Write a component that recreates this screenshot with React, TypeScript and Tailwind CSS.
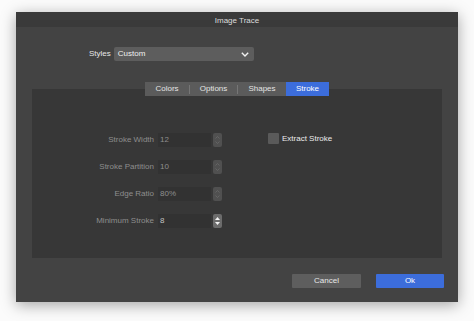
const Stepper = ({ enabled }: { enabled: boolean }) => (
  <div
    className={`w-[9px] h-[14px] rounded-[2px] flex flex-col items-center justify-center gap-[2px] ${
      enabled ? "bg-[#6c6c6c]" : "bg-[#505050]"
    }`}
  >
    {enabled ? (
      <>
        <svg width="5" height="3" viewBox="0 0 5 3">
          <path d="M0 3 L2.5 0 L5 3 Z" fill="#f2f2f2" />
        </svg>
        <svg width="5" height="3" viewBox="0 0 5 3">
          <path d="M0 0 L2.5 3 L5 0 Z" fill="#f2f2f2" />
        </svg>
      </>
    ) : (
      <>
        <svg width="5" height="3" viewBox="0 0 5 3">
          <path d="M0.5 2.5 L2.5 0.5 L4.5 2.5" fill="none" stroke="#6a6a6a" strokeWidth="0.8" />
        </svg>
        <svg width="5" height="3" viewBox="0 0 5 3">
          <path d="M0.5 0.5 L2.5 2.5 L4.5 0.5" fill="none" stroke="#6a6a6a" strokeWidth="0.8" />
        </svg>
      </>
    )}
  </div>
);

const rows = [
  { label: "Stroke Width", value: "12", enabled: false },
  { label: "Stroke Partition", value: "10", enabled: false },
  { label: "Edge Ratio", value: "80%", enabled: false },
  { label: "Minimum Stroke", value: "8", enabled: true },
];

const tabs = ["Colors", "Options", "Shapes", "Stroke"];

export default function App() {
  return (
    <div className="w-[474px] h-[321px] bg-[#fbfbfb] pt-[12px] pl-[16px] font-['Liberation_Sans',Arial,sans-serif] text-[8px] leading-none">
      <div className="w-[442px] h-[290px] bg-[#434343] shadow-[0_3px_14px_rgba(0,0,0,0.35)] flex flex-col">
        {/* Title bar */}
        <div className="h-[15px] pt-[2px] bg-[#3a3a3a] flex items-center justify-center text-[#dcdcdc]">
          Image Trace
        </div>

        {/* Styles row */}
        <div className="mt-[20px] ml-[73px] flex items-center gap-[3px]">
          <span className="text-[#e6e6e6]">Styles</span>
          <div className="w-[140px] h-[14px] bg-[#5d5d5d] rounded-[2px] flex items-center justify-between pl-[4px] pr-[5px] text-[#f0f0f0]">
            <span>Custom</span>
            <svg width="8" height="5" viewBox="0 0 8 5">
              <path d="M0.8 0.8 L4 4 L7.2 0.8" fill="none" stroke="#f2f2f2" strokeWidth="1.4" />
            </svg>
          </div>
        </div>

        {/* Tabs */}
        <div className="mt-[21px] flex justify-center relative z-10">
          <div className="flex h-[14px] bg-[#5b5b5b]">
            {tabs.map((t, i) => (
              <div key={t} className="flex items-center">
                {i > 0 && i < 3 && <div className="w-px h-[9px] bg-[#767676]" />}
                <div
                  className={`h-[14px] flex items-center justify-center ${
                    t === "Stroke" ? "bg-[#3c6ddb] text-white w-[43px]" : "text-[#e4e4e4]"
                  } ${t === "Colors" ? "w-[44px]" : ""} ${t === "Options" ? "w-[47px]" : ""} ${
                    t === "Shapes" ? "w-[48px]" : ""
                  }`}
                >
                  {t}
                </div>
              </div>
            ))}
          </div>
        </div>

        {/* Panel */}
        <div className="mx-[16px] -mt-[7px] h-[169px] bg-[#373737] flex pt-[44px]">
          <div className="flex flex-col gap-[13px]">
            {rows.map((r) => (
              <div key={r.label} className="flex items-center h-[14px]">
                <span className="w-[122px] text-right text-[#8e8e8e]">{r.label}</span>
                <div
                  className={`ml-[4px] w-[53px] h-[14px] bg-[#323232] flex items-center pl-[2px] ${
                    r.enabled ? "text-[#c2c2c2]" : "text-[#8e8e8e]"
                  }`}
                >
                  {r.value}
                </div>
                <div className="ml-[2px]">
                  <Stepper enabled={r.enabled} />
                </div>
              </div>
            ))}
          </div>
          <div className="ml-[46px] flex items-center gap-[3px] h-[11px]">
            <div className="w-[11px] h-[11px] bg-[#5a5a5a] rounded-[1px]" />
            <span className="text-[#ececec]">Extract Stroke</span>
          </div>
        </div>

        {/* Buttons */}
        <div className="mt-[16px] mr-[14px] flex justify-end gap-[15px]">
          <div className="w-[69px] h-[14px] bg-[#5e5e5e] rounded-[1px] flex items-center justify-center text-[#e8e8e8]">
            Cancel
          </div>
          <div className="w-[68px] h-[14px] bg-[#3c6ddb] rounded-[1px] flex items-center justify-center text-white">
            Ok
          </div>
        </div>
      </div>
    </div>
  );
}
